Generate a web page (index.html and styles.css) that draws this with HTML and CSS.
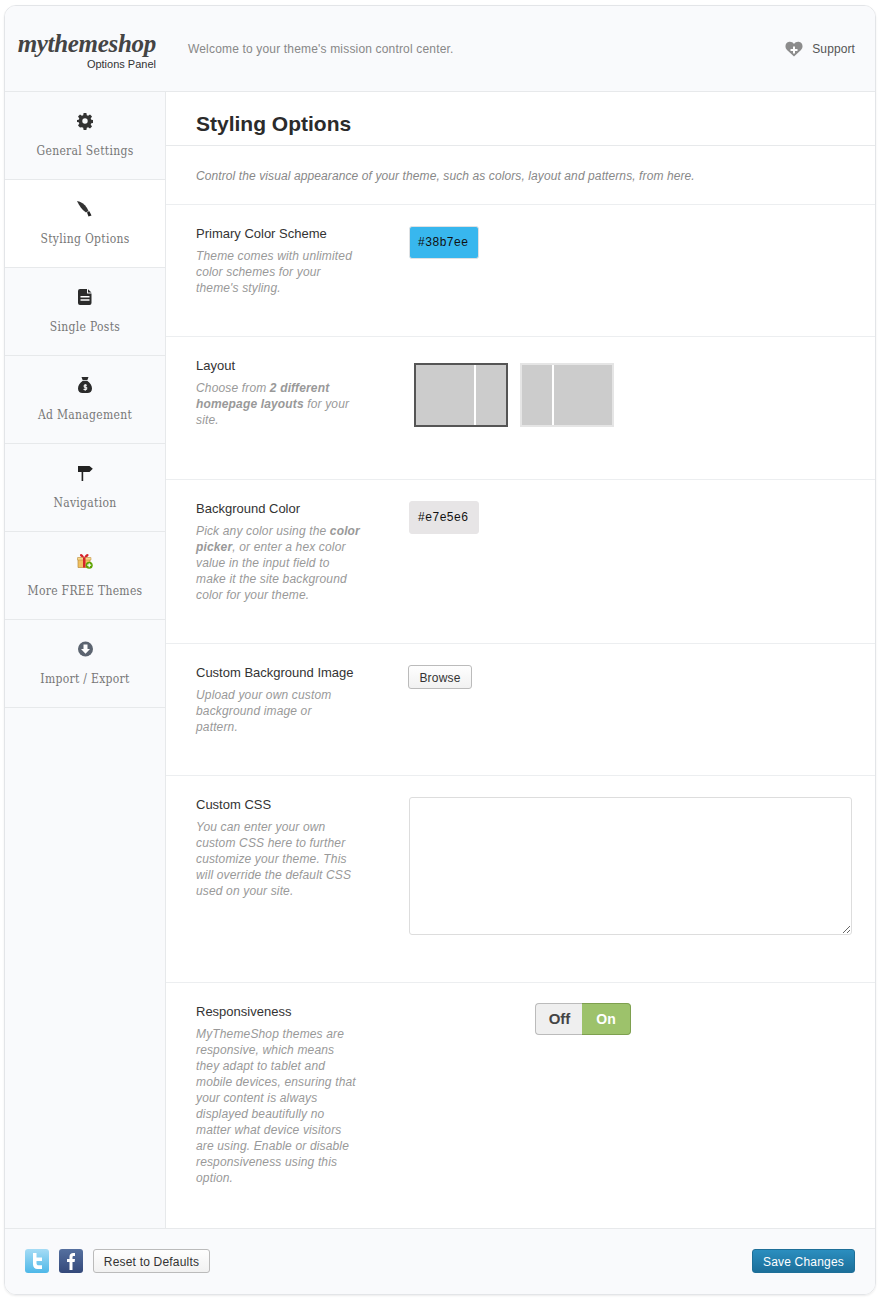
FILE: index.html
```html
<!DOCTYPE html>
<html lang="en">
<head>
  <meta charset="UTF-8" />
  <title>Options Panel</title>
  <link rel="stylesheet" href="styles.css">
</head>
<body>
  <div class="panel">
    <header class="top">
      <div class="brand">
        <span class="logo">mythemeshop</span>
        <span class="logo-sub">Options Panel</span>
      </div>
      <p class="welcome">Welcome to your theme's mission control center.</p>
      <a class="support" href="#">
        <svg width="18" height="16" viewBox="0 0 18 16"><path d="M9 15.500 2 9C-.6 6.400.3 1.800 3.500 1 5.800.4 7.800 1.300 9 3c1.200-1.700 3.200-2.600 5.500-2 3.200.8 4.100 5.400 1.500 8z" fill="#8c8c8c"/><path d="M8 5.500h2v2.500h2.500v2H10v2.500H8V10H5.500V8H8z" fill="#fff"/></svg>
        Support
      </a>
    </header>

    <div class="columns">
      <nav class="sidebar">
        <a class="nav-item" href="#">
          <svg width="16" height="16" viewBox="0 0 16 16"><path fill-rule="evenodd" d="M6.600 0h2.800l.4 2.200 1.300.6L13 1.500l2 2-1.300 1.900.6 1.300 2.200.4v2.800l-2.200.4-.6 1.300 1.300 1.900-2 2-1.900-1.300-1.300.6-.4 2.200H6.600l-.4-2.200-1.300-.6L3 14.500l-2-2 1.300-1.900-.6-1.300L-.5 9V7l2.200-.3.6-1.300L1 3.500l2-2 1.900 1.300 1.300-.6zM8 5.300a2.700 2.700 0 1 0 0 5.400 2.700 2.700 0 0 0 0-5.400z" fill="#333"/></svg>
          General Settings
        </a>
        <a class="nav-item active" href="#">
          <svg width="18" height="18" viewBox="0 0 18 18"><path d="M1 1C5 1.500 8.500 4 11 8l1.500 3-2.500 1.500C6 10 3 5.500 1 1z" fill="#333"/><path d="M11 12.500 13.200 11l2.300 4.500-3 1z" fill="#222"/></svg>
          Styling Options
        </a>
        <a class="nav-item" href="#">
          <svg width="14" height="16" viewBox="0 0 14 16"><path d="M2 0h7v4.500h4.500V14a2 2 0 0 1-2 2H2a2 2 0 0 1-2-2V2a2 2 0 0 1 2-2zm8 .3 3.500 3.300H10z" fill="#2b2b2b"/><path d="M2.500 7h9v1.500h-9zm0 3.200h9v1.500h-9z" fill="#fff"/></svg>
          Single Posts
        </a>
        <a class="nav-item" href="#">
          <svg width="14" height="16" viewBox="0 0 14 16"><path d="M3.500 0h7L9.300 3.200H4.700zM4.500 4h5C12 5.500 14 8.500 14 11.500 14 14.500 12 16 9.500 16h-5C2 16 0 14.500 0 11.500 0 8.500 2 5.500 4.500 4z" fill="#2b2b2b"/><path d="M9 8.200H6.200v2H8.700v2.200H5.500M7.200 7v6.800" fill="none" stroke="#fff" stroke-width="1"/></svg>
          Ad Management
        </a>
        <a class="nav-item" href="#">
          <svg width="15" height="16" viewBox="0 0 15 16"><path d="M0 1h11.500L14.800 3.800 11.500 7H5.200v9H3.600V7H0z" fill="#222"/></svg>
          Navigation
        </a>
        <a class="nav-item" href="#">
          <svg width="16" height="16" viewBox="0 0 16 16"><path d="M1 5h12v9.500H1z" fill="#f0c060" stroke="#b98a3a" stroke-width=".7"/><path d="M.5 4.500h13.500V7H.5z" fill="#f7d68a" stroke="#b98a3a" stroke-width=".5"/><path d="M6 4.500h2.500v10H6z" fill="#d6232a"/><path d="M7 4.500C4 4.500 2.500 3 3 1.500 4 0 6.200 1.500 7.200 4.500 8.200 1.500 10.500 0 11.500 1.500 12 3 10.500 4.500 7.500 4.500z" fill="#d6232a"/><circle cx="12.200" cy="12.200" r="3.500" fill="#5da300"/><path d="M11.600 10.200h1.200v1.400h1.400v1.200h-1.400v1.400h-1.200v-1.400h-1.400v-1.200h1.400z" fill="#fff"/></svg>
          More FREE Themes
        </a>
        <a class="nav-item" href="#">
          <svg width="15" height="15" viewBox="0 0 15 15"><circle cx="7.500" cy="7.500" r="7.500" fill="#5c6470"/><path d="M5.500 3h4v4.500H12l-4.500 4.800L3 7.500h2.500z" fill="#fff"/></svg>
          Import / Export
        </a>
      </nav>

      <main class="content">
        <h1 class="page-title">Styling Options</h1>
        <p class="intro">Control the visual appearance of your theme, such as colors, layout and patterns, from here.</p>

        <section class="row row-color">
          <div class="info">
            <h3>Primary Color Scheme</h3>
            <p>Theme comes with unlimited color schemes for your theme's styling.</p>
          </div>
          <div class="control"><span class="swatch swatch-blue">#38b7ee</span></div>
        </section>

        <section class="row row-layout">
          <div class="info">
            <h3>Layout</h3>
            <p>Choose from <b>2 different homepage layouts</b> for your site.</p>
          </div>
          <div class="control layouts">
            <div class="layout-opt selected"><span class="wide"></span><span class="narrow"></span></div>
            <div class="layout-opt"><span class="narrow"></span><span class="wide"></span></div>
          </div>
        </section>

        <section class="row row-bg">
          <div class="info">
            <h3>Background Color</h3>
            <p>Pick any color using the <b>color picker</b>, or enter a hex color value in the input field to make it the site background color for your theme.</p>
          </div>
          <div class="control"><span class="swatch swatch-grey">#e7e5e6</span></div>
        </section>

        <section class="row row-image">
          <div class="info">
            <h3>Custom Background Image</h3>
            <p>Upload your own custom background image or pattern.</p>
          </div>
          <div class="control control-browse"><button class="btn btn-browse">Browse</button></div>
        </section>

        <section class="row row-css">
          <div class="info">
            <h3>Custom CSS</h3>
            <p>You can enter your own custom CSS here to further customize your theme. This will override the default CSS used on your site.</p>
          </div>
          <div class="control control-wide"><textarea class="css-box"></textarea></div>
        </section>

        <section class="row row-resp">
          <div class="info">
            <h3>Responsiveness</h3>
            <p>MyThemeShop themes are responsive, which means they adapt to tablet and mobile devices, ensuring that your content is always displayed beautifully no matter what device visitors are using. Enable or disable responsiveness using this option.</p>
          </div>
          <div class="control control-toggle">
            <div class="toggle"><span class="off">Off</span><span class="on">On</span></div>
          </div>
        </section>
      </main>
    </div>

    <footer class="bottom">
      <a class="social twitter" href="#">
        <svg width="24" height="24" viewBox="0 0 24 24"><path d="M8 4h3.500v4.500H17V12h-5.500v2c0 1.500.8 2.300 2.200 2.300H17V20h-4.500C9.800 20 8 18 8 15.200z" fill="#fff"/></svg>
      </a>
      <a class="social facebook" href="#">
        <svg width="24" height="24" viewBox="0 0 24 24"><path d="M10.500 21v-8H8v-3h2.500V7.800C10.500 5.200 12 4 14.200 4H16v3h-1.200c-.9 0-1.300.4-1.300 1.200V10H16l-.4 3h-2.100v8z" fill="#fff"/></svg>
      </a>
      <button class="btn btn-reset">Reset to Defaults</button>
      <button class="btn-save">Save Changes</button>
    </footer>
  </div>
</body>
</html>
```

FILE: styles.css
```css
* {
  box-sizing: border-box;
}
body {
  margin: 0;
  background: #fff;
  font-family: "Liberation Sans", Arial, sans-serif;
  color: #333;
  padding: 5px 5px 5px 4px;
}
a {
  text-decoration: none;
}
.panel {
  width: 872px;
  height: 1290px;
  border: 1px solid #e3e5e8;
  border-radius: 12px;
  box-shadow: 0 1px 2px rgba(0,0,0,0.08);
  overflow: hidden;
  display: flex;
  flex-direction: column;
}

/* header */
.top {
  height: 86px;
  flex: none;
  background: #f9fafc;
  border-bottom: 1px solid #e7e9eb;
  display: flex;
  align-items: center;
  padding: 0 20px 0 12px;
}
.brand {
  display: flex;
  flex-direction: column;
  align-items: flex-end;
  width: 139px;
  margin-top: 4px;
}
.logo {
  font-family: "Liberation Serif", serif;
  font-weight: bold;
  font-style: italic;
  font-size: 25px;
  line-height: 27px;
  letter-spacing: -0.3px;
  color: #444;
}
.logo-sub {
  font-size: 11px;
  line-height: 14px;
  color: #333;
}
.welcome {
  margin: 0 0 0 32px;
  font-size: 12px;
  letter-spacing: .17px;
  color: #888;
  flex: 1;
}
.support {
  display: flex;
  align-items: center;
  gap: 9px;
  font-size: 12px;
  letter-spacing: .1px;
  color: #555;
}

/* sidebar */
.columns {
  flex: 1;
  display: flex;
  min-height: 0;
}
.sidebar {
  width: 161px;
  flex: none;
  background: #f9fafc;
  border-right: 1px solid #e7e9eb;
}
.nav-item {
  height: 88px;
  border-bottom: 1px solid #e7e9eb;
  display: flex;
  flex-direction: column;
  align-items: center;
  padding-top: 20px;
  font-family: "DejaVu Serif Condensed", "DejaVu Serif", serif;
  font-size: 12px;
  letter-spacing: .3px;
  color: #777;
}
.nav-item svg {
  height: 18px;
  margin-bottom: 14px;
}
.nav-item.active {
  background: #fff;
}

/* main */
.content {
  flex: 1;
  background: #fff;
  min-width: 0;
}
.page-title {
  margin: 0;
  height: 54px;
  padding: 19px 30px 0;
  font-size: 21px;
  line-height: 26px;
  color: #2b2b2b;
  border-bottom: 1px solid #e7e9eb;
}
.intro {
  margin: 0;
  height: 59px;
  padding: 22px 30px 0;
  font-size: 12px;
  line-height: 16px;
  letter-spacing: .1px;
  font-style: italic;
  color: #888;
  border-bottom: 1px solid #eceef0;
}
.row {
  display: flex;
  padding: 21px 23px 0 30px;
  border-bottom: 1px solid #eceef0;
}
.row-color { height: 132px; }
.row-layout { height: 143px; }
.row-bg { height: 164px; }
.row-image { height: 132px; }
.row-css { height: 207px; }
.row-resp { height: 245px; border-bottom: 0; }
.info {
  width: 165px;
  flex: none;
}
.info h3 {
  margin: 1px 0 7px;
  font-size: 13px;
  line-height: 14px;
  font-weight: normal;
  color: #333;
}
.info p {
  margin: 0;
  width: 163px;
  font-size: 12px;
  line-height: 16px;
  letter-spacing: .15px;
  font-style: italic;
  color: #999;
}
.row-bg .info p {
  width: 165.500px;
}
.row-image .info p {
  width: 150px;
}
.control {
  margin-left: 48px;
}
.swatch {
  display: block;
  width: 70px;
  height: 33px;
  line-height: 33px;
  padding-right: 2px;
  border-radius: 3px;
  border: 1px solid #dfe1e3;
  text-align: center;
  font-family: "Liberation Mono", monospace;
  font-size: 12px;
  color: #111;
}
.swatch-blue {
  background: #38b7ee;
}
.swatch-grey {
  background: #e7e5e6;
  border-color: #e7e5e6;
}
.layouts {
  display: flex;
  gap: 12px;
  margin-left: 53px;
  padding-top: 5px;
}
.layout-opt {
  width: 94px;
  height: 64px;
  border: 2px solid #e5e5e5;
  display: flex;
  gap: 2px;
}
.layout-opt.selected {
  border-color: #555;
}
.layout-opt span {
  background: #ccc;
}
.layout-opt .wide {
  flex: 1;
}
.layout-opt .narrow {
  width: 30px;
}
.btn {
  background: linear-gradient(#fefefe, #f1f1f1);
  border: 1px solid #bbb;
  border-radius: 3px;
  font-family: "Liberation Sans", Arial, sans-serif;
  font-size: 12px;
  letter-spacing: .2px;
  color: #333;
  padding: 1px 0 0;
}
.control-browse {
  margin-left: 47px;
}
.btn-browse {
  width: 64px;
  height: 24px;
  display: block;
}
.control-wide {
  flex: 1;
}
.css-box {
  display: block;
  width: 443px;
  height: 138px;
  border: 1px solid #ddd;
  border-radius: 3px;
  background: #fff;
}
.control-toggle {
  margin: -1px 0 0 174px;
}
.toggle {
  display: flex;
  width: 96px;
  height: 32px;
  font-size: 14px;
  font-weight: bold;
  line-height: 30px;
  text-align: center;
}
.toggle .off {
  width: 47px;
  padding-left: 1px;
  background: #efefef;
  color: #444;
  font-size: 15px;
  border: 1px solid #bbb;
  border-right: 0;
  border-radius: 4px 0 0 4px;
}
.toggle .on {
  width: 49px;
  background: #9dc26b;
  color: #fff;
  border: 1px solid #7ea04f;
  border-left: 0;
  border-radius: 0 4px 4px 0;
}

/* footer */
.bottom {
  flex: none;
  height: 66px;
  background: #f9fafc;
  border-top: 1px solid #e7e9eb;
  display: flex;
  align-items: flex-start;
  padding: 20px 20px 0;
}
.social {
  width: 24px;
  height: 24px;
  border-radius: 3px;
  display: block;
  margin-right: 10px;
}
.twitter {
  background: linear-gradient(#a5dcf5, #4eb8e8);
}
.facebook {
  background: linear-gradient(#55709f, #34497a);
}
.btn-reset {
  width: 117px;
  height: 24px;
}
.btn-save {
  margin-left: auto;
  width: 103px;
  height: 24px;
  border: 1px solid #1e6f98;
  border-radius: 3px;
  background: linear-gradient(#2b8ebf, #1c6f9a);
  color: #fff;
  font-family: "Liberation Sans", Arial, sans-serif;
  font-size: 12px;
  letter-spacing: .2px;
  padding: 1px 0 0;
}
```
